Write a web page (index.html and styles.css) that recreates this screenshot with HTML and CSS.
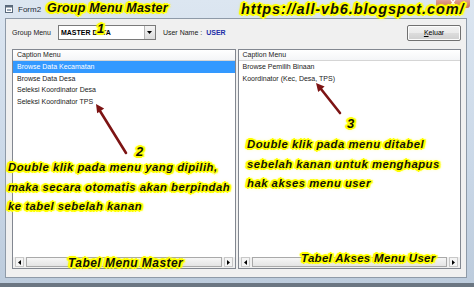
FILE: index.html
```html
<!DOCTYPE html>
<html>
<head>
<meta charset="utf-8">
<link rel="stylesheet" href="styles.css">
</head>
<body>
<div class="window">
  <div class="titlebar">
    <svg class="ticon" width="8" height="8" viewBox="0 0 8 8"><rect x="0.5" y="0.5" width="7" height="7" fill="#fff" stroke="#5a6a7c"/><rect x="0.5" y="0.5" width="7" height="2" fill="#5a6a7c"/><rect x="2" y="4" width="4" height="2" fill="#9aa8b8"/></svg>
    <span class="ttext">Form2</span>
    <div class="closebtn"><svg width="6" height="5" viewBox="0 0 6 5"><path d="M1 0L5 5M5 0L1 5" stroke="#fff" stroke-width="1.3"/></svg></div>
  </div>
  <div class="client">
    <div class="toolbar">
      <span class="lbl">Group Menu</span>
      <div class="combo"><span class="cval">MASTER DATA</span><span class="cbtn"><svg width="5" height="3" viewBox="0 0 5 3"><path d="M0 0H5L2.5 3Z" fill="#000"/></svg></span></div>
      <span class="lbl user">User Name :</span>
      <span class="uval">USER</span>
      <span class="spacer"></span>
      <button class="btn"><u>K</u>eluar</button>
    </div>
    <div class="lists">
      <div class="list">
        <div class="lhead">Caption Menu</div>
        <div class="lrows">
          <div class="row sel">Browse Data Kecamatan</div>
          <div class="row">Browse Data Desa</div>
          <div class="row">Seleksi Koordinator Desa</div>
          <div class="row">Seleksi Koordinator TPS</div>
        </div>
        <div class="hscroll"><span class="arr"><svg width="3" height="5" viewBox="0 0 3 5"><path d="M3 0V5L0 2.5Z" fill="#000"/></svg></span><span class="thumb"></span><span class="arr"><svg width="3" height="5" viewBox="0 0 3 5"><path d="M0 0V5L3 2.5Z" fill="#000"/></svg></span></div>
      </div>
      <div class="list">
        <div class="lhead">Caption Menu</div>
        <div class="lrows">
          <div class="row">Browse Pemilih Binaan</div>
          <div class="row">Koordinator (Kec, Desa, TPS)</div>
        </div>
        <div class="hscroll"><span class="arr"><svg width="3" height="5" viewBox="0 0 3 5"><path d="M3 0V5L0 2.5Z" fill="#000"/></svg></span><span class="thumb"></span><span class="arr"><svg width="3" height="5" viewBox="0 0 3 5"><path d="M0 0V5L3 2.5Z" fill="#000"/></svg></span></div>
      </div>
    </div>
  </div>

  <svg class="arrows" width="474" height="287" viewBox="0 0 474 287">
    <line x1="126" y1="153" x2="100" y2="111" stroke="#7d1414" stroke-width="2.6" stroke-linecap="round"/>
    <polygon points="96,104 104.2,108.4 97.2,113.2" fill="#7d1414"/>
    <line x1="340" y1="113" x2="321" y2="89" stroke="#7d1414" stroke-width="2.6" stroke-linecap="round"/>
    <polygon points="316,83 324.6,86.6 318.2,92" fill="#7d1414"/>
  </svg>

  <div class="note n-title">Group Menu Master</div>
  <div class="note n-url">https://all-vb6.blogspot.com/</div>
  <div class="note n-num n1">1</div>
  <div class="note n-num n2">2</div>
  <div class="note n-num n3">3</div>
  <div class="note n-block n-left">Double klik pada menu yang dipilih,<br>maka secara otomatis akan berpindah<br>ke tabel sebelah kanan</div>
  <div class="note n-block n-right">Double klik pada menu ditabel<br>sebelah kanan untuk menghapus<br>hak akses menu user</div>
  <div class="note n-cap n-capl">Tabel Menu Master</div>
  <div class="note n-cap n-capr">Tabel Akses Menu User</div>
</div>
</body>
</html>
```
FILE: styles.css
```css
html, body {
  margin: 0;
  padding: 0;
  background: #ccd9e8;
}
.window {
  position: relative;
  width: 474px;
  height: 287px;
  overflow: hidden;
  background: linear-gradient(#dce6f1, #c9d7e7 60%, #bccbdc);
  display: flex;
  flex-direction: column;
  font-family: "Liberation Sans", Arial, sans-serif;
  box-shadow: inset 0 -4px 0 #6b7682;
}
.titlebar {
  height: 18px;
  display: flex;
  align-items: center;
  padding-left: 5px;
  position: relative;
}
.ticon { margin-right: 5px; }
.ttext { font-size: 8px; color: #1e2a36; }
.closebtn {
  position: absolute;
  right: 4px;
  top: 0;
  width: 34px;
  height: 8px;
  background: linear-gradient(#e0a294, #c86a58);
  border-radius: 0 0 3px 3px;
  display: flex;
  justify-content: center;
  align-items: flex-start;
}
.client {
  flex: 1;
  margin: 0 7px 9px 5px;
  background: #f0f0f0;
  border: 1px solid #8e9aa8;
  display: flex;
  flex-direction: column;
  padding: 5px 5px 8px 6px;
  font-size: 7px;
  color: #000;
}
.toolbar {
  display: flex;
  align-items: center;
  height: 17px;
}
.lbl { color: #222; }
.combo {
  margin-left: 7px;
  width: 98px;
  height: 15px;
  background: #fff;
  border: 1px solid #7a7a7a;
  display: flex;
  align-items: center;
  box-sizing: border-box;
}
.cval { font-weight: bold; padding-left: 2px; flex: 1; }
.cbtn {
  width: 10px;
  height: 13px;
  background: linear-gradient(#f4f4f4, #dcdcdc);
  border-left: 1px solid #b5b5b5;
  display: flex;
  align-items: center;
  justify-content: center;
}
.user { margin-left: 7px; }
.uval { margin-left: 4px; font-weight: bold; color: #1d2fa8; }
.spacer { flex: 1; }
.btn {
  width: 54px;
  height: 16px;
  margin-right: 0;
  padding: 0;
  font-family: inherit;
  font-size: 7px;
  color: #000;
  border: 1px solid #707070;
  border-radius: 2px;
  background: linear-gradient(#f2f2f2, #ebebeb 50%, #dddddd 51%, #cfcfcf);
  box-shadow: inset 0 0 0 1px #fcfcfc;
}
.lists {
  flex: 1;
  display: flex;
  gap: 2px;
  margin-top: 8px;
}
.list {
  flex: 1;
  background: #fff;
  border: 1px solid #828790;
  display: flex;
  flex-direction: column;
}
.lhead {
  height: 10px;
  line-height: 10px;
  padding-left: 4px;
  border-bottom: 1px solid #d5d5d5;
  background: linear-gradient(#ffffff, #f4f5f7);
  color: #222;
}
.lrows { flex: 1; padding-top: 0; }
.row {
  height: 11.5px;
  line-height: 11.5px;
  padding-left: 4px;
  color: #1a1a1a;
}
.row.sel { background: #3399ff; color: #fff; }
.hscroll {
  height: 10px;
  display: flex;
  align-items: stretch;
  background: #f0f0f0;
  padding: 0 2px 1px 2px;
}
.arr {
  width: 9px;
  display: flex;
  align-items: center;
  justify-content: center;
  background: #f4f4f4;
  border: 1px solid #c8c8c8;
  box-sizing: border-box;
}
.thumb {
  flex: 1;
  margin: 0 2px;
  background: linear-gradient(#f6f6f6, #e4e4e4);
  border: 1px solid #a9a9a9;
}
.arrows {
  position: absolute;
  left: 0;
  top: 0;
  pointer-events: none;
}
.note {
  position: absolute;
  font-family: "Liberation Sans", Arial, sans-serif;
  font-weight: bold;
  font-style: italic;
  color: #111108;
  white-space: nowrap;
  text-shadow:
    0 0 1px #ff0, 1px 1px 0 #ff0, -1px -1px 0 #ff0, 1px -1px 0 #ff0, -1px 1px 0 #ff0,
    2px 0 0 #ff0, -2px 0 0 #ff0, 0 2px 0 #ff0, 0 -2px 0 #ff0,
    2px 1px 1px #ff0, -2px 1px 1px #ff0, 2px -1px 1px #ff0, -2px -1px 1px #ff0,
    0 0 4px #ff0;
}
.n-title { left: 47px; top: 0; font-size: 12.5px; line-height: 17px; letter-spacing: 0.2px; }
.n-url { left: 241px; top: 1px; font-size: 14.5px; line-height: 17px; letter-spacing: 0.9px; }
.n-num { font-size: 13px; line-height: 14px; }
.n1 { left: 97px; top: 22px; }
.n2 { left: 136px; top: 145px; }
.n3 { left: 347px; top: 117px; }
.n-block { font-size: 11.3px; line-height: 19.5px; letter-spacing: 0.5px; }
.n-left { left: 8px; top: 158px; }
.n-right { left: 247px; top: 135px; }
.n-cap { line-height: 14px; letter-spacing: 0.45px; }
.n-capl { left: 68px; top: 256px; font-size: 12px; }
.n-capr { left: 301px; top: 251px; font-size: 11.5px; letter-spacing: 0.3px; }
```
